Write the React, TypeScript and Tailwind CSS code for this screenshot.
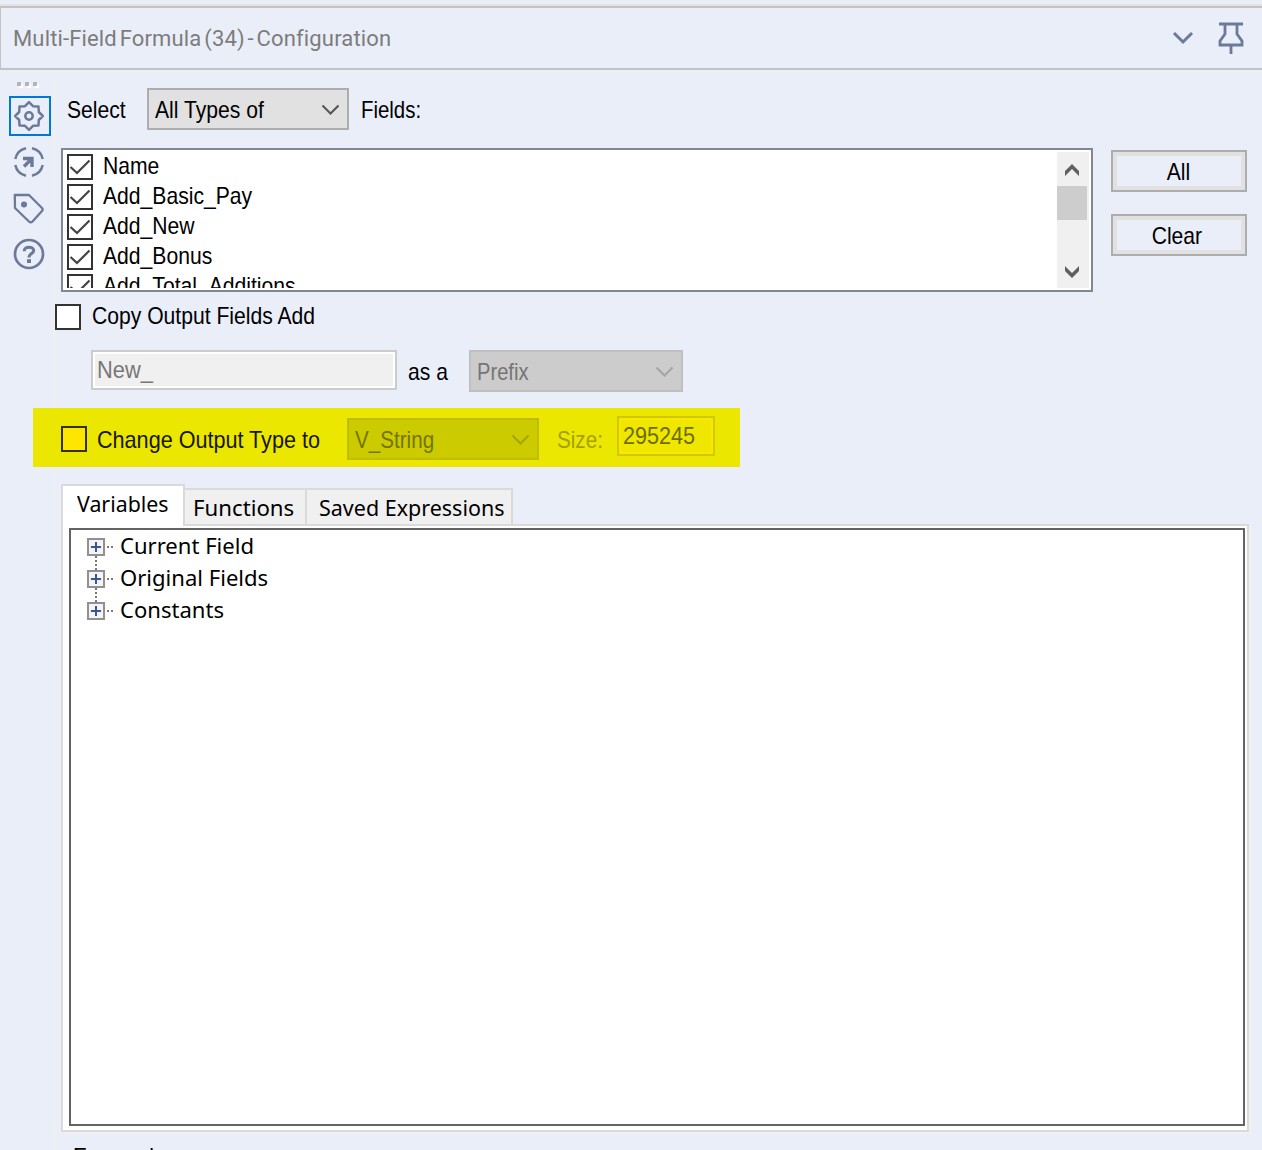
import React from 'react';

const fields = ['Name', 'Add_Basic_Pay', 'Add_New', 'Add_Bonus', 'Add_Total_Additions'];
const treeItems = ['Current Field', 'Original Fields', 'Constants'];

interface LabelProps {
  children: React.ReactNode;
  className?: string;
  stretch?: string;
}

const Label: React.FC<LabelProps> = ({ children, className = '', stretch = 'scale-x-[0.88]' }) => (
  <span className={`inline-block origin-left whitespace-nowrap text-[24px] leading-[30px] ${stretch} ${className}`}>
    {children}
  </span>
);

const Arrow: React.FC<{ color: string }> = ({ color }) => (
  <svg className="mt-[2px]" width="18" height="12" viewBox="0 0 18 12" fill="none" stroke={color} strokeWidth="2">
    <path d="M1.5 1.5L9.5 9.5L17.5 1.5" />
  </svg>
);

const CheckBox: React.FC<{ checked?: boolean; className?: string }> = ({ checked, className = 'border-[#333333] bg-white' }) => (
  <span className={`flex h-[26px] w-[26px] shrink-0 items-center justify-center border-2 ${className}`}>
    {checked && (
      <svg width="22" height="22" viewBox="0 0 22 22" fill="none" stroke="#444444" strokeWidth="2.2">
        <path d="M1.5 11L8 17L20.5 4.5" />
      </svg>
    )}
  </span>
);

const Sidebar: React.FC = () => (
  <aside className="flex w-[55px] shrink-0 flex-col pt-3">
    <div className="flex h-[1068px] flex-col border-r-2 border-[#f0f0f0] pl-[9px]">
      <div className="flex gap-1 pl-2">
        <span className="h-1 w-1 bg-[#b5b5b5] shadow-[2px_2px_0_#fff]" />
        <span className="h-1 w-1 bg-[#b5b5b5] shadow-[2px_2px_0_#fff]" />
        <span className="h-1 w-1 bg-[#b5b5b5] shadow-[2px_2px_0_#fff]" />
      </div>
      <div className="mt-[10px] flex h-10 w-[42px] items-center justify-center border-2 border-[#0078d7] pr-[2px]">
        <svg className="shrink-0" width="32" height="32" viewBox="0 0 32 32" fill="none" stroke="#6b7a99" strokeWidth="2.5" strokeLinejoin="round">
          <path d="M12 6.2L16 2.2L20 6.2L25.5 6.5L25.8 12L29.8 16L25.8 20L25.5 25.5L20 25.8L16 29.8L12 25.8L6.5 25.5L6.2 20L2.2 16L6.2 12L6.5 6.5Z" />
          <circle cx="16" cy="16" r="3.7" />
        </svg>
      </div>
      <svg className="mt-[10px] ml-1" width="32" height="32" viewBox="0 0 32 32" fill="none" stroke="#6b7a99" strokeWidth="2.5">
        <path d="M19 2.3A14 14 0 0 1 29.7 13M29.7 19A14 14 0 0 1 19 29.7M13 29.7A14 14 0 0 1 2.3 19M2.3 13A14 14 0 0 1 13 2.3" />
        <path d="M10 12.5H19V21M18.5 13L11 20.5" strokeWidth="3.4" />
      </svg>
      <svg className="mt-[15px] ml-1" width="32" height="32" viewBox="0 0 32 32" fill="none" stroke="#6b7a99" strokeWidth="2.3" strokeLinejoin="round">
        <path d="M1.8 2H16L29 15Q30.3 16.5 29 18L19.5 28.5Q17.8 30.2 16 28.5L2 15Z" />
        <circle cx="11" cy="11.5" r="3" fill="#6b7a99" stroke="none" />
      </svg>
      <svg className="mt-[13px] ml-1" width="32" height="32" viewBox="0 0 32 32" fill="none" stroke="#6b7a99" strokeWidth="2.7">
        <circle cx="16" cy="16" r="14" />
        <path d="M11.3 13.2V12.5C11.3 8 20.7 8 20.7 12.5C20.7 15.8 16 15.3 16 19.5" strokeWidth="3" />
        <path d="M16 21.2V25" strokeWidth="4" />
      </svg>
    </div>
  </aside>
);

const FieldList: React.FC = () => (
  <div className="mt-[18px] ml-[6px] flex items-start gap-[18px]">
    <div className="flex h-[144px] w-[1032px] justify-between border-2 border-[#828790] bg-white p-[2px]">
      <div className="h-[136px] overflow-hidden pt-[2px] pl-[2px]">
        {fields.map((field) => (
          <div key={field} className="flex h-[30px] items-start gap-[10px]">
            <CheckBox checked />
            <Label className="-mt-[3px]">{field}</Label>
          </div>
        ))}
      </div>
      <div className="flex w-8 flex-col bg-[#f0f0f0]">
        <div className="flex h-[34px] w-[30px] items-center justify-center">
          <svg width="14" height="12" viewBox="0 0 14 12" fill="#606060" className="mt-[2px]">
            <path d="M7 0L14 7V12L7 5L0 12V7Z" />
          </svg>
        </div>
        <div className="h-[34px] w-[30px] bg-[#cdcdcd]" />
        <div className="mt-auto flex h-[34px] w-[30px] items-center justify-center">
          <svg width="14" height="12" viewBox="0 0 14 12" fill="#606060" className="mt-[2px]">
            <path d="M7 12L14 5V0L7 7L0 0V5Z" />
          </svg>
        </div>
      </div>
    </div>
    <div className="flex flex-col gap-[22px] pt-[2px]">
      {['All', 'Clear'].map((text) => (
        <button key={text} className="h-[42px] w-[136px] border-2 border-[#adadad] p-0 pt-px inset-ring-4 inset-ring-[#e1e1e1]">
          <Label className="pl-[3px]">{text}</Label>
        </button>
      ))}
    </div>
  </div>
);

const Expander: React.FC = () => (
  <svg className="mt-[2px]" width="28" height="32" viewBox="0 0 28 32" fill="none">
    <rect x="1" y="8" width="16" height="16" fill="#f4f4f4" stroke="#919191" strokeWidth="2" />
    <path d="M4 16H14M9 11V21" stroke="#3b559c" strokeWidth="2" />
    <path d="M20 16H22M24 16H26" stroke="#777" strokeWidth="2" />
  </svg>
);

const ExpressionTabs: React.FC = () => (
  <section className="mt-[17px] ml-[6px] font-['Noto_Sans',sans-serif] text-[22px] leading-[30px]">
    <div className="flex h-10 items-end">
      <div className="relative z-10 -mb-[2px] h-[42px] w-[124px] border-2 border-b-0 border-[#dadada] bg-white pt-[2px] pl-[14px] whitespace-nowrap">
        <span className="inline-block origin-left scale-x-[0.97]">Variables</span>
      </div>
      <div className="h-9 w-[122px] border-t-2 border-r-2 border-[#dadada] bg-[#f0f0f0] pt-[2px] pl-2 whitespace-nowrap">
        <span className="inline-block origin-left scale-x-[1.01]">Functions</span>
      </div>
      <div className="h-9 w-[206px] border-t-2 border-r-2 border-[#dadada] bg-[#f0f0f0] pt-[2px] pl-3 whitespace-nowrap">
        <span className="inline-block origin-left scale-x-[0.977]">Saved Expressions</span>
      </div>
    </div>
    <div className="h-[608px] w-[1188px] border-2 border-[#dadada] bg-white pt-[2px] pl-[6px] shadow-[3px_2px_0_#f0f0f0]">
      <div className="h-[598px] w-[1176px] border-2 border-[#646464] bg-white">
        {treeItems.map((item, i) => (
          <div key={item} className="relative flex h-8 items-center pl-4">
            <Expander />
            {i > 0 && <span className="absolute -top-[6px] left-6 h-[14px] border-l-2 border-dotted border-[#777]" />}
            <span className="-mt-[2px] ml-[5px] inline-block origin-left scale-x-[1.003] whitespace-nowrap">{item}</span>
          </div>
        ))}
      </div>
    </div>
  </section>
);

const App: React.FC = () => {
  return (
    <div className="h-[1150px] w-[1262px] overflow-hidden bg-[#eaeef9] font-['Liberation_Sans',sans-serif] text-black">
      <div className="h-[6px] border-b-2 border-[#e3e3e3]" />
      <header className="flex h-16 items-center justify-between border-y-2 border-l border-[#c3c3c3] pr-[18px] pl-3">
        <h1 className="font-['Roboto',sans-serif] text-[22px] tracking-[0.15px] whitespace-nowrap text-[#7c7c7c] [word-spacing:-2.8px]">
          Multi-Field Formula (34) - Configuration
        </h1>
        <div className="flex items-center gap-6 text-[#6b7a99]">
          <svg width="22" height="14" viewBox="0 0 22 14" fill="none" stroke="currentColor" strokeWidth="3">
            <path d="M2 2L11 11L20 2" />
          </svg>
          <svg width="26" height="32" viewBox="0 0 26 32" fill="none" stroke="currentColor" strokeWidth="2.8">
            <path d="M1 2H25M7 2V12L2 19V23H24V19L19 12V2M13 23V32" />
          </svg>
        </div>
      </header>

      <div className="flex h-[1080px]">
        <Sidebar />
        <main className="w-[1207px] shrink-0 pt-[18px]">
          <div className="flex h-[42px] items-center pl-3">
            <Label className="mt-[2px] w-20">Select</Label>
            <div className="flex h-[42px] w-[202px] items-center justify-between border-2 border-[#adadad] bg-[#e1e1e1] pr-2 pl-[6px]">
              <Label className="mt-[2px]">All Types of</Label>
              <Arrow color="#555555" />
            </div>
            <Label className="mt-[2px] ml-3" stretch="scale-x-[0.85]">Fields:</Label>
          </div>

          <FieldList />

          <div className="mt-3 flex h-[26px] items-center gap-[11px]">
            <CheckBox />
            <Label className="-mt-[2px]">Copy Output Fields Add</Label>
          </div>

          <div className="mt-5 flex h-[42px] items-start pl-9">
            <div className="h-10 w-[306px] border-2 border-[#cccccc] bg-[#f0f0f0] pt-[3px] pl-1 inset-ring-2 inset-ring-white">
              <Label className="text-[#777]" stretch="scale-x-[0.91]">New_</Label>
            </div>
            <Label className="mt-[7px] ml-[11px] w-[61px]">as a</Label>
            <div className="flex h-[42px] w-[214px] items-center justify-between border-2 border-[#bfbfbf] bg-[#cccccc] pr-2 pl-[6px] text-[#757575]">
              <Label className="mt-[2px]" stretch="scale-x-[0.84]">Prefix</Label>
              <Arrow color="#a5a5a5" />
            </div>
          </div>

          <div className="relative mt-4 -ml-[22px] flex h-[59px] w-[707px] bg-[#ebe700] pl-7">
            <CheckBox className="mt-[18px] border-[#333200] bg-[#ffe600]" />
            <Label className="mt-[17px] ml-[10px] w-[250px] text-[#171700]" stretch="scale-x-[0.9]">Change Output Type to</Label>
            <div className="mt-[10px] flex h-[42px] w-[192px] shrink-0 items-center justify-between border-2 border-[#bfbd00] bg-[#cccb00] pr-2 pl-[6px] text-[#757400]">
              <Label className="mt-[2px]" stretch="scale-x-[0.86]">V_String</Label>
              <Arrow color="#a5a400" />
            </div>
            <Label className="mt-[17px] ml-[18px] w-[60px] text-[#a3a000]" stretch="scale-x-[0.86]">Size:</Label>
            <div className="mt-2 h-10 w-[98px] shrink-0 border-2 border-[#cccb00] bg-[#f0e700] pt-[3px] pl-1 inset-ring-2 inset-ring-[#ffe600]">
              <Label className="text-[#6d6c00]" stretch="scale-x-[0.9]">295245</Label>
            </div>
          </div>

          <ExpressionTabs />

          <div className="mt-[10px] pl-[18px]">
            <Label>Expression</Label>
          </div>
        </main>
      </div>
    </div>
  );
};

export default App;
